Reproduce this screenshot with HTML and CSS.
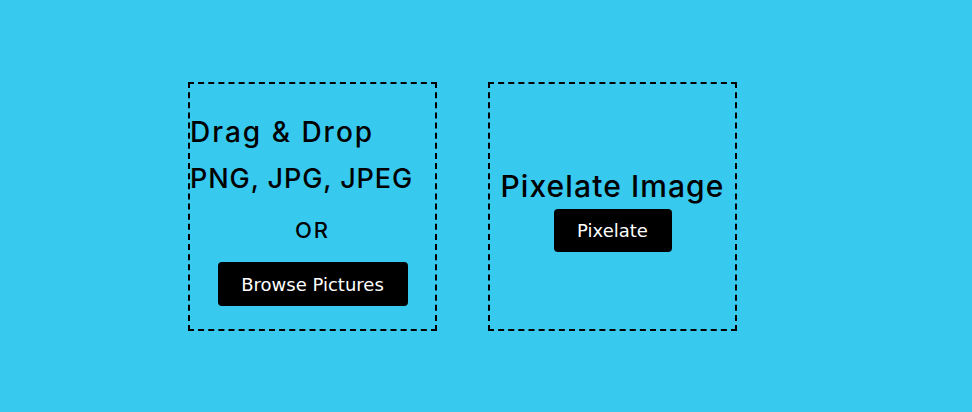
FILE: index.html
```html
<!DOCTYPE html>
<html>
<head>
<meta charset="utf-8">
<link rel="stylesheet" href="styles.css">
</head>
<body>
<main class="page">
  <section class="box box-drop">
    <h2 class="title">Drag &amp; Drop</h2>
    <h3 class="types">PNG, JPG, JPEG</h3>
    <p class="or">OR</p>
    <button class="btn btn-browse">Browse Pictures</button>
  </section>
  <section class="box box-pixel">
    <h2 class="pix-title">Pixelate Image</h2>
    <button class="btn btn-pixel">Pixelate</button>
  </section>
</main>
</body>
</html>
```
FILE: styles.css
```css
html, body {
  margin: 0;
  padding: 0;
  height: 100%;
}
body {
  background: #38c9ef;
  font-family: Inter, "DejaVu Sans", sans-serif;
  color: #000;
}
.page {
  display: flex;
  align-items: center;
  height: 100%;
  padding-left: 188px;
  gap: 51px;
  box-sizing: border-box;
}
.box {
  width: 245px;
  height: 245px;
  border: 2px dashed #000;
  display: flex;
  flex-direction: column;
  justify-content: center;
}
.title, .types, .or, .pix-title {
  margin: 0;
  font-weight: 500;
  white-space: nowrap;
}
.title {
  font-size: 28px;
  line-height: 40px;
  letter-spacing: 2px;
  margin-top: 6px;
  text-align: left;
}
.types {
  font-size: 27px;
  line-height: 44px;
  letter-spacing: 0.9px;
  margin-top: 5px;
  text-align: left;
}
.or {
  font-size: 22px;
  line-height: 30px;
  letter-spacing: 2px;
  margin-top: 14px;
  text-align: center;
}
.btn {
  background: #000;
  color: #fff;
  border: none;
  border-radius: 4px;
  font-family: "DejaVu Sans", sans-serif;
  font-size: 18px;
  align-self: center;
  cursor: pointer;
  padding: 0;
}
.btn-browse {
  width: 190px;
  height: 44px;
  margin-top: 17px;
}
.box-pixel {
  align-items: center;
}
.pix-title {
  font-size: 30px;
  line-height: 40px;
  letter-spacing: 1.1px;
  margin-top: 5px;
  text-align: center;
}
.btn-pixel {
  width: 118px;
  height: 43px;
  margin-top: 3px;
}
```
